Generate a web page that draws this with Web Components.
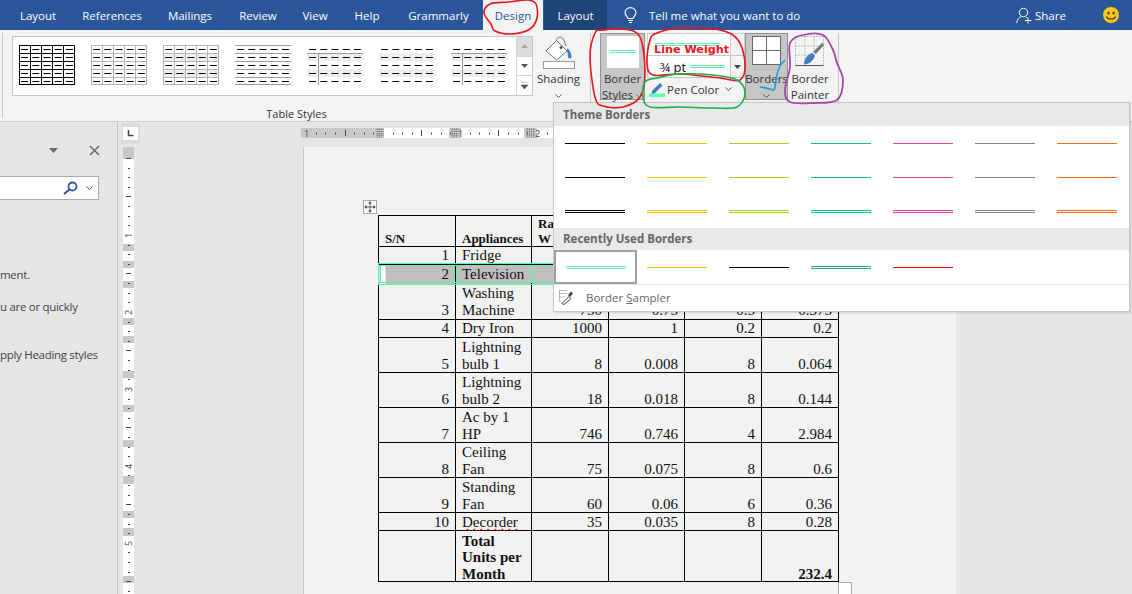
<!DOCTYPE html>
<html>
<head>
<meta charset="utf-8">
<style>
	html, body { margin: 0; padding: 0; background: #e6e6e6; }
	body { width: 1132px; height: 594px; overflow: hidden; font-family: "Open Sans", "Noto Sans", sans-serif; }
</style>
</head>
<body>
<wd-app>
	<wd-titlebar slot="title">
		<wd-tab w="64">Layout</wd-tab>
		<wd-tab w="84">References</wd-tab>
		<wd-tab w="72">Mailings</wd-tab>
		<wd-tab w="64">Review</wd-tab>
		<wd-tab w="50">View</wd-tab>
		<wd-tab w="54">Help</wd-tab>
		<wd-tab w="89">Grammarly</wd-tab>
		<wd-tab w="60" active>Design</wd-tab>
		<wd-tab w="63" dark>Layout</wd-tab>
	</wd-titlebar>
	<wd-ribbon slot="ribbon"></wd-ribbon>
	<wd-navpane slot="pane"></wd-navpane>
	<wd-vruler slot="vruler"></wd-vruler>
	<wd-document slot="doc"></wd-document>
	<wd-popup slot="over"></wd-popup>
	<wd-ink slot="over"></wd-ink>
</wd-app>

<script>
	const FONT = '"Open Sans", "Noto Sans", sans-serif';

	class WdApp extends HTMLElement {
		constructor() {
			super();
			this.attachShadow({ mode: 'open' }).innerHTML = `
			<style>
				:host { display: block; position: relative; width: 1132px; height: 594px; overflow: hidden; background: #e6e6e6; }
				.body { display: flex; height: 472px; overflow: hidden; }
			</style>
			<slot name="title"></slot>
			<slot name="ribbon"></slot>
			<div class="body">
				<slot name="pane"></slot>
				<slot name="vruler"></slot>
				<slot name="doc"></slot>
			</div>
			<slot name="over"></slot>`;
		}
	}

	class WdTitlebar extends HTMLElement {
		constructor() {
			super();
			this.attachShadow({ mode: 'open' }).innerHTML = `
			<style>
				:host { display: flex; align-items: stretch; height: 30px; padding-left: 6px; background: #2b579a; color: #fff; font: 11.5px ${FONT}; }
				.tell { display: flex; align-items: center; margin-left: 17px; width: 392px; }
				.tell svg { margin-right: 12px; }
				.share { display: flex; align-items: center; width: 68px; }
				.share svg { margin-right: 3px; }
				.smile { display: flex; align-items: center; margin-left: 19px; }
			</style>
			<slot></slot>
			<div class="tell">
				<svg width="13" height="17" viewBox="0 0 13 17" fill="none" stroke="#fff" stroke-width="1.1"><path d="M4 11.5C3.6 9.5 1 8.6 1 5.6a5.5 5 0 0 1 11 0c0 3-2.6 3.9-3 5.9zM4.2 13.5h4.6M5 15.5h3"/></svg>
				<span>Tell me what you want to do</span>
			</div>
			<div class="share">
				<svg width="16" height="17" viewBox="0 0 16 17" fill="none" stroke="#fff" stroke-width="1"><circle cx="7.5" cy="5.5" r="4.2"/><path d="M.7 16c.4-3.5 2.2-5.6 4.3-6.4M10 10l1 1M12 10.5v6M9 13.5h6.5"/></svg>
				<span>Share</span>
			</div>
			<div class="smile">
				<svg width="16" height="16" viewBox="0 0 16 16"><circle cx="8" cy="8" r="8" fill="#fcc81a"/><ellipse cx="5.4" cy="6" rx="1.1" ry="1.6" fill="#3d3200"/><ellipse cx="10.6" cy="6" rx="1.1" ry="1.6" fill="#3d3200"/><path d="M3.4 9.5c1.2 3.4 8 3.4 9.2 0" fill="none" stroke="#3d3200" stroke-width="1.1"/></svg>
			</div>`;
		}
	}

	class WdTab extends HTMLElement {
		constructor() {
			super();
			this.attachShadow({ mode: 'open' }).innerHTML = `
			<style>
				:host { display: flex; align-items: center; justify-content: center; box-sizing: border-box; }
				:host([active]) { background: #f3f3f3; color: #2b579a; }
				:host([dark]) { background: #1f4478; margin-left: 1px; }
			</style>
			<slot></slot>`;
		}

		connectedCallback() {
			this.style.width = this.getAttribute('w') + 'px';
		}
	}

	// one preview of the table style gallery
	class WdThumb extends HTMLElement {
		constructor() {
			super();
			this.attachShadow({ mode: 'open' });
		}

		connectedCallback() {
			const kind = this.getAttribute('kind');
			const rows = [4, 12, 20, 28, 36];
			const cols = [5.6, 16.8, 28, 39.2, 50.4];
			let s = '';
			if (kind === 'banded' || kind === 'first' || kind === 'plain') {
				[8, 24].forEach(v => { s += `<rect x="0" y="${v}" width="56" height="8" fill="#eeeeee"/>`; });
			}
			if (kind === 'black' || kind === 'grey' || kind === 'banded') {
				const c = kind === 'black' ? '#000' : '#b5b5b5';
				s += `<rect x=".5" y=".5" width="55" height="39" fill="none" stroke="${c}"/>`;
				[8, 16, 24, 32].forEach(v => { s += `<path d="M0 ${v}.5h56" stroke="${c}"/>`; });
				[11, 22, 33, 44].forEach(v => { s += `<path d="M${v}.5 0v40" stroke="${c}"/>`; });
			}
			if (kind === 'lines') {
				[0, 8, 16, 24, 32, 39].forEach(v => { s += `<path d="M0 ${v}.5h56" stroke="#9a9a9a"/>`; });
			}
			if (kind === 'first') {
				s += '<path d="M0 8.5h56" stroke="#9a9a9a"/><path d="M11.5 8v32" stroke="#9a9a9a"/>';
			}
			rows.forEach(y => cols.forEach(x => {
				s += `<path d="M${x - 3.5} ${y}.5h7" stroke="#000"/>`;
			}));
			this.shadowRoot.innerHTML = `
			<style>:host { display: block; width: 56px; height: 40px; } svg { display: block; }</style>
			<svg width="56" height="40" viewBox="0 0 56 40">${s}</svg>`;
		}
	}

	class WdBigButton extends HTMLElement {
		constructor() {
			super();
			this.attachShadow({ mode: 'open' }).innerHTML = `
			<style>
				:host { display: flex; flex-direction: column; align-items: center; box-sizing: border-box; height: 67px; color: #333; font: 11.5px/16px ${FONT}; text-align: center; }
				:host([on]) { background: #c6c6c6; box-shadow: inset 0 0 0 1px #929292; }
				.icon { flex: none; height: 38px; display: flex; align-items: flex-start; padding-top: 3px; box-sizing: border-box; }
				.label { flex: none; white-space: nowrap; }
			</style>
			<div class="icon"><slot name="icon"></slot></div>
			<div class="label"><slot></slot></div>`;
		}

		connectedCallback() {
			this.style.width = this.getAttribute('w') + 'px';
		}
	}

	const CHEV = `<svg width="7" height="4" viewBox="0 0 7 4" style="vertical-align:middle"><path d="M.5.5l3 3 3-3" fill="none" stroke="#555"/></svg>`;

	class WdRibbon extends HTMLElement {
		constructor() {
			super();
			this.attachShadow({ mode: 'open' }).innerHTML = `
			<style>
				:host { display: flex; height: 92px; box-sizing: border-box; background: #f3f3f3; border-bottom: 1px solid #d2d2d2; color: #333; font: 11.5px ${FONT}; }
				.sep { width: 1px; height: 85px; margin-top: 3px; background: #c6c6c6; flex: none; }
				.styles { width: 533px; margin-left: 1px; flex: none; }
				.gallery { display: flex; height: 60px; margin: 6px 0 0 8px; box-sizing: border-box; width: 521px; background: #fff; border: 1px solid #c6c6c6; }
				.thumbs { display: flex; gap: 16px; padding: 8px 0 0 6px; flex: 1; }
				.scroll { display: flex; flex-direction: column; width: 15px; border-left: 1px solid #d6d6d6; }
				.scroll div { flex: 1; display: flex; align-items: center; justify-content: center; }
				.scroll div + div { border-top: 1px solid #d6d6d6; }
				.scroll .up { background: #dcdcdc; }
				.glabel { text-align: center; margin-top: 10px; font-size: 11px; padding-left: 52px; }
				.shade { margin: 3px 0 0 -1px; width: 45px; flex: none; }
				.tools { display: flex; margin: 3px 0 0 9px; align-items: flex-start; flex: none; }
				.col { width: 100px; height: 67px; display: flex; flex-direction: column; }
				.style-row { height: 22px; margin: 0 0 0 2px; display: flex; border: 1px solid #d0d0d0; border-bottom: 0; box-sizing: border-box; background: #fff; align-items: center; }
				.style-row .ln { flex: 1; margin: 0 10px 0 7px; border-top: 3px double #5ff0b0; }
				.style-row .btn { width: 13px; height: 100%; border-left: 1px solid #d0d0d0; background: #f3f3f3; }
				.weight { height: 23px; margin-left: 2px; display: flex; align-items: center; box-sizing: border-box; border: 1px solid #c6c6c6; background: #fff; color: #111; }
				.weight .txt { padding-left: 12px; width: 30px; flex: none; font-size: 13px; white-space: nowrap; }
				.weight .ln { flex: 1; margin: 0 5px 0 0; border-top: 3px double #5ff0b0; }
				.weight .btn { width: 13px; height: 100%; border-left: 1px solid #c6c6c6; background: #f3f3f3; display: flex; align-items: center; justify-content: center; }
				.pen { display: flex; align-items: center; height: 22px; padding-left: 4px; gap: 2px; }
				.pen span { margin-right: 4px; }
				.gap { width: 1px; }
			</style>
			<div class="sep" style="margin-left:2px"></div>
			<div class="styles">
				<div class="gallery">
					<div class="thumbs">
						<wd-thumb kind="black"></wd-thumb>
						<wd-thumb kind="grey"></wd-thumb>
						<wd-thumb kind="banded"></wd-thumb>
						<wd-thumb kind="lines"></wd-thumb>
						<wd-thumb kind="first"></wd-thumb>
						<wd-thumb kind="plain"></wd-thumb>
						<wd-thumb kind="first"></wd-thumb>
					</div>
					<div class="scroll">
						<div class="up"><svg width="7" height="4"><path d="M3.5 0L7 4H0z" fill="#a6a6a6"/></svg></div>
						<div><svg width="7" height="4"><path d="M0 0h7L3.500 4z" fill="#555"/></svg></div>
						<div><svg width="7" height="7"><path d="M0 0h7M0 3h7L3.500 7z" stroke="#555" stroke-width=".6" fill="#555"/></svg></div>
					</div>
				</div>
				<div class="glabel">Table Styles</div>
			</div>
			<wd-big-button class="shade" w="45"><svg slot="icon" width="34" height="33" viewBox="0 0 34 33">
					<path d="M4 15L14.500 4.500 25 15 14.500 24z" fill="#fff" stroke="#777"/>
					<path d="M14.500 4.500C14 1 20 -1 22 4.500L24 10" fill="none" stroke="#777"/>
					<circle cx="19" cy="11.500" r="1.500" fill="#555"/>
					<path d="M25 12c3 2 4.500 6 4.500 9 0 2-3 2-3.500 0-.3-1.500 0-4-1-6z" fill="#3f7ec2"/>
					<rect x="1.500" y="25.500" width="31" height="7" fill="#fff" stroke="#999"/>
				</svg>Shading<br>${CHEV}</wd-big-button>
			<div class="sep" style="margin-left:9px"></div>
			<div class="tools">
				<wd-big-button on w="45"><svg slot="icon" width="32" height="32" viewBox="0 0 32 32"><rect width="32" height="32" fill="#fff"/><path d="M3 14.500h26M3 16.500h26" stroke="#5ff0b0"/></svg>Border<br>Styles ${CHEV}</wd-big-button>
				<div class="col">
					<div class="style-row"><div class="ln"></div><div class="btn"></div></div>
					<div class="weight"><div class="txt">¾ pt</div><div class="ln"></div><div class="btn"><svg width="7" height="4"><path d="M0 0h7L3.500 4z" fill="#444"/></svg></div></div>
					<div class="pen">
						<svg width="16" height="16" viewBox="0 0 16 16"><path d="M3 10L11 2l2.500 2.500-8 8-3 .5z" fill="#3f7ec2"/><rect x="0" y="12.500" width="16" height="3.500" fill="#5fffb4"/></svg>
						<span>Pen Color</span>${CHEV}
					</div>
				</div>
				<wd-big-button on w="43"><svg slot="icon" width="29" height="29" viewBox="0 0 29 29"><rect x=".5" y=".5" width="28" height="28" fill="#fff" stroke="#666"/><path d="M14.500 0v29M0 14.500h29" stroke="#666"/></svg>Borders<br>${CHEV}</wd-big-button>
				<div class="gap"></div>
				<wd-big-button w="42"><svg slot="icon" width="30" height="31" viewBox="0 0 30 31">
						<path d="M.5 .5h28M.5 .5v29M28.500 .5v29M10 .5v29M19 .5v14M.5 10h28M.5 19h14" fill="none" stroke="#888" stroke-dasharray="1 2"/>
						<path d="M.5 29.500h28" stroke="#555"/>
						<path d="M18 16l9-9 2 2-8 9z" fill="#777"/>
						<path d="M9 28c0-5 4-10 8-11l3 2c-1 5-6 10-11 9z" fill="#3f7ec2"/>
					</svg>Border<br>Painter</wd-big-button>
			</div>
			<div class="sep" style="margin-left:7px"></div>`;
		}
	}

	class WdNavpane extends HTMLElement {
		constructor() {
			super();
			this.attachShadow({ mode: 'open' }).innerHTML = `
			<style>
				:host { display: block; box-sizing: border-box; width: 118px; height: 100%; flex: none; background: #e6e6e6; border-right: 1px solid #c6c6c6; color: #444; font: 11.5px ${FONT}; letter-spacing: -.3px; overflow: hidden; white-space: nowrap; }
				.head { display: flex; align-items: center; justify-content: flex-end; height: 29px; margin-top: 14px; padding-right: 17px; gap: 31px; }
				.search { display: flex; align-items: center; justify-content: flex-end; box-sizing: border-box; width: 99px; height: 24px; margin-top: 11px; padding-right: 5px; gap: 8px; background: #fff; border: 1px solid #ababab; border-left: 0; }
				p { margin: 0; line-height: 16px; }
				.a { margin-top: 67px; }
				.b { margin-top: 16px; }
				.c { margin-top: 32px; }
			</style>
			<div class="head">
				<svg width="9" height="5"><path d="M0 0h9L4.500 5z" fill="#6a6a6a"/></svg>
				<svg width="11" height="11" viewBox="0 0 11 11"><path d="M1 1l9 9M10 1l-9 9" stroke="#6a6a6a" stroke-width="1.600"/></svg>
			</div>
			<div class="search">
				<svg width="15" height="14" viewBox="0 0 15 14" fill="none" stroke="#2b579a" stroke-width="1.800"><circle cx="9.500" cy="5.500" r="4"/><path d="M6.500 8.500L1 13" stroke-width="2"/></svg>
				${CHEV}
			</div>
			<p class="a">ment.</p>
			<p class="b">u are or quickly</p>
			<p class="c">pply Heading styles</p>`;
		}
	}

	function gridMark(x, y, w) {
		let s = '';
		for (let i = 0; i <= 3; i++) {
			s += `<path d="M${x + i * w / 3} ${y}v8M${x} ${y + i * 8 / 3}h${w}" stroke="#666" stroke-dasharray="1 1" stroke-width=".8"/>`;
		}
		return s;
	}

	class WdVruler extends HTMLElement {
		constructor() {
			super();
			this.attachShadow({ mode: 'open' });
			// grey stretches of the ruler, page y
			const grey = [[147, 159], [244, 251], [261, 268], [281, 288], [318, 325], [336, 343], [371, 378], [405, 412], [440, 447], [476, 484], [511, 518], [528, 536], [576, 583]];
			const top = 122;
			let s = `<rect x="5" y="25" width="11" height="450" fill="#fff"/>`;
			grey.forEach(g => { s += `<rect x="5" y="${g[0] - top}" width="11" height="${g[1] - g[0]}" fill="#c8c8c8"/>`; });
			for (let k = 0; k < 46; k++) {
				const y = Math.round(158 + k * 9.62 - top) + .5;
				if (k % 8 === 0 && k > 0) {
					s += `<text x="0" y="0" transform="translate(13.500 ${y}) rotate(-90)" text-anchor="middle" font-family="Open Sans, sans-serif" font-size="9" fill="#444">${k / 8}</text>`;
				} else if (k % 4 === 0) {
					s += `<path d="M8 ${y}h5" stroke="#444"/>`;
				} else {
					s += `<path d="M10 ${y}h2" stroke="#444"/>`;
				}
			}
			s += `<rect x="3" y="1" width="19" height="21" fill="#dcdcdc"/><rect x="5" y="5" width="15" height="13" fill="#fff"/><path d="M10.500 8v5.500h5" fill="none" stroke="#444" stroke-width="1.500"/>`;
			this.shadowRoot.innerHTML = `
			<style>:host { display: block; width: 22px; height: 100%; flex: none; } svg { display: block; }</style>
			<svg width="22" height="472" viewBox="0 0 22 472">${s}</svg>`;
		}
	}

	class WdHruler extends HTMLElement {
		constructor() {
			super();
			this.attachShadow({ mode: 'open' });
			const left = 301;
			let s = '<rect x="0" y="0" width="654" height="10" fill="#fff"/>';
			[[301, 384], [449, 461], [524, 537]].forEach(g => { s += `<rect x="${g[0] - left}" y="0" width="${g[1] - g[0]}" height="10" fill="#c8c8c8"/>`; });
			for (let k = -8; k < 24; k++) {
				const x = Math.round(383 + k * 9.62 - left) + .5;
				if (x < 0) continue;
				if (k % 8 === 0 && k !== 0) {
					s += `<text x="${x}" y="8.500" text-anchor="middle" font-family="Open Sans, sans-serif" font-size="9" fill="#444">${Math.abs(k / 8)}</text>`;
				} else if (k % 4 === 0 && k !== 0) {
					s += `<path d="M${x} 2v6" stroke="#444"/>`;
				} else if (k !== 0) {
					s += `<path d="M${x} 4.500v2" stroke="#444"/>`;
				}
			}
			s += gridMark(377 - left, 1, 6) + gridMark(452 - left, 1, 6) + gridMark(527 - left, 1, 7);
			this.shadowRoot.innerHTML = `
			<style>:host { display: block; height: 10px; width: 654px; } svg { display: block; }</style>
			<svg width="654" height="10">${s}</svg>`;
		}
	}

	const ROWS = [
		[18, '1', 'Fridge', '', '', '', ''],
		[20, '2', 'Television', '', '', '', ''],
		[35, '3', 'Washing Machine', '750', '0.75', '0.5', '0.375'],
		[17.5, '4', 'Dry Iron', '1000', '1', '0.2', '0.2'],
		[35, '5', 'Lightning bulb 1', '8', '0.008', '8', '0.064'],
		[35, '6', 'Lightning bulb 2', '18', '0.018', '8', '0.144'],
		[35, '7', 'Ac by 1 HP', '746', '0.746', '4', '2.984'],
		[35, '8', 'Ceiling Fan', '75', '0.075', '8', '0.6'],
		[35, '9', 'Standing Fan', '60', '0.06', '6', '0.36'],
		[17.5, '10', 'Decorder', '35', '0.035', '8', '0.28']
	];

	class WdDocument extends HTMLElement {
		constructor() {
			super();
			const body = ROWS.map((r, i) => {
				const name = r[2] === 'Decorder' ? '<span class="sp">Decorder</span>' : r[2];
				const cls = i === 1 ? 'sel' : (i < 4 ? 'hi' : '');
				return `<tr style="height:${r[0]}px" class="${cls}">
					<td class="n">${r[1]}</td><td class="t">${name}</td>
					<td class="n">${r[3]}</td><td class="n">${r[4]}</td><td class="n">${r[5]}</td><td class="n">${r[6]}</td></tr>`;
			}).join('');
			this.attachShadow({ mode: 'open' }).innerHTML = `
			<style>
				:host { display: block; flex: 1; min-width: 0; padding: 6px 0 0 161px; background: #e6e6e6; }
				.page { box-sizing: border-box; width: 653px; height: 460px; margin: 9px 0 0 2px; padding: 68px 0 0 74px; background: #f2f2f2; border-left: 1px solid #c6c6c6; }
				.wrap { position: relative; width: 460px; }
				table { border-collapse: collapse; table-layout: fixed; width: 460px; font: 15px/17px "Liberation Serif", serif; color: #111; }
				td, th { border: 1px solid #000; padding: 0 6px; vertical-align: bottom; overflow: hidden; position: relative; top: 1px; }
				th { font-size: 13px; font-weight: bold; text-align: left; line-height: 15px; top: 0; }
				.n { text-align: right; }
				.t { text-align: left; }
				.hi td { top: 0; }
				.sel td { background: #bfbfbf; line-height: 14px; vertical-align: middle; top: 0; padding-bottom: 2px; }
				.sel td:first-child { background: linear-gradient(90deg, #fff 0 6px, #bfbfbf 6px); }
				.sp { text-decoration: underline wavy #e02020 1px; text-underline-offset: 1px; }
				.tot td { font-weight: bold; line-height: 16.500px; }
				.move { position: absolute; left: -15px; top: -15px; width: 14px; height: 14px; box-sizing: border-box; border: 1px solid #a8a8a8; background: #f7f7f7; }
				.size { position: absolute; left: 460px; top: 367px; width: 14px; height: 14px; box-sizing: border-box; border: 1px solid #a8a8a8; background: #fff; }
				.pick { position: absolute; left: 0; top: 48px; }
				svg { display: block; }
			</style>
			<wd-hruler></wd-hruler>
			<div class="page">
				<div class="wrap">
					<div class="move"><svg width="12" height="12" viewBox="0 0 12 12"><path d="M6 1v10M1 6h10M4.800 2.200L6 .8l1.200 1.400zM4.800 9.800L6 11.200l1.200-1.400zM2.200 4.800L.8 6l1.400 1.200zM9.800 4.800L11.200 6l-1.400 1.200z" stroke="#444" stroke-width=".8" fill="#444"/></svg></div>
					<table>
						<colgroup><col style="width:77px"><col style="width:76px"><col style="width:77px"><col style="width:76px"><col style="width:77px"><col style="width:77px"></colgroup>
						<tr style="height:29px"><th>S/N</th><th>Appliances</th><th>Ra<br>W</th><th></th><th></th><th></th></tr>
						${body}
						<tr class="tot" style="height:51px"><td></td><td class="t">Total Units per Month</td><td></td><td></td><td></td><td class="n">232.4</td></tr>
					</table>
					<svg class="pick" width="176" height="24" viewBox="0 0 176 24" fill="none" stroke="#5ff0b0">
						<path d="M0 .5h176M0 2.500h176M0 19.500h176M0 21.500h176M.5 0v22M2.500 2v18M76.500 2v18M78.500 2v18M153.500 2v18M155.500 2v18"/>
					</svg>
					<div class="size"></div>
				</div>
			</div>`;
		}
	}

	class WdLine extends HTMLElement {
		constructor() {
			super();
			this.attachShadow({ mode: 'open' }).innerHTML = `
			<style>
				:host { display: flex; align-items: center; box-sizing: border-box; width: 82px; height: 34px; padding-left: 11px; }
				:host([picked]) { width: 83px; padding-left: 10px; border: 2px solid #a0a0a0; outline: 1px solid #fff; outline-offset: -3px; }
				i { display: block; width: 60px; height: 0; }
			</style>
			<i></i>`;
		}

		connectedCallback() {
			const c = this.getAttribute('c');
			const style = this.hasAttribute('double') ? `3px double ${c}` : `1px solid ${c}`;
			this.shadowRoot.querySelector('i').style.borderTop = style;
		}
	}

	class WdPopup extends HTMLElement {
		constructor() {
			super();
			const colors = ['#000000', '#ffc000', '#a5d21f', '#00c97c', '#ef3b97', '#848484', '#ff6a13'];
			const row = extra => colors.map(c => `<wd-line c="${c}" ${extra}></wd-line>`).join('');
			this.attachShadow({ mode: 'open' }).innerHTML = `
			<style>
				:host { position: absolute; left: 553px; top: 102px; box-sizing: border-box; width: 577px; height: 210px; background: #fff; border: 1px solid #c6c6c6; box-shadow: 1px 1px 2px rgba(0,0,0,.15); font: 11.500px ${FONT}; color: #666; z-index: 5; }
				h3 { margin: 0; height: 23px; padding-left: 9px; background: #e9e9e9; font: bold 11.500px/23px ${FONT}; color: #666; }
				h3.r { height: 22px; line-height: 22px; }
				.grid { display: flex; flex-wrap: wrap; height: 102px; }
				.recent { display: flex; height: 34px; }
				.recent wd-line[picked] + wd-line { margin-left: -1px; }
				.sampler { display: flex; align-items: center; height: 25px; border-top: 1px solid #e3e3e3; padding-left: 5px; gap: 12px; }
				u { text-underline-offset: 1px; }
			</style>
			<h3>Theme Borders</h3>
			<div class="grid">${row('')}${row('')}${row('double')}</div>
			<h3 class="r">Recently Used Borders</h3>
			<div class="recent">
				<wd-line picked double c="#66f0b0"></wd-line>
				<wd-line c="#ffc000"></wd-line>
				<wd-line c="#000000"></wd-line>
				<wd-line double c="#1db173"></wd-line>
				<wd-line c="#ff0000"></wd-line>
			</div>
			<div class="sampler">
				<svg width="15" height="15" viewBox="0 0 15 15"><path d="M.5 .5h8M.5 .5v11M.5 3.500h8M.5 7h5" fill="none" stroke="#777" stroke-dasharray="1 1"/><path d="M3 13.500l7-7 2 2-7 6z" fill="#fff" stroke="#444"/><path d="M9 5l3-3.500 2 2L11 7z" fill="#444"/></svg>
				<span>Border <u>S</u>ampler</span>
			</div>`;
		}
	}

	// the pen marks somebody drew over the screenshot
	class WdInk extends HTMLElement {
		constructor() {
			super();
			const marks = [
				['#e8151c', 1.6, [[490, 4], [484, 13], [491, 24], [495, 31], [512, 34], [530, 29], [537, 18], [536, 4], [528, 0], [508, 2]]],
				['#e8151c', 1.6, [[595, 33], [590, 57], [595, 97], [603, 106], [623, 107], [640, 97], [645, 73], [640, 37], [623, 29], [603, 30]]],
				['#e8151c', 1.6, [[650, 40], [647, 63], [653, 75], [680, 74], [720, 78], [740, 80], [745, 63], [738, 40], [720, 30], [680, 28], [657, 33]]],
				['#1db14b', 1.6, [[645, 82], [643, 97], [650, 107], [680, 107], [713, 108], [737, 107], [745, 93], [737, 80], [713, 75], [680, 74], [657, 78]]],
				['#a349a4', 1.8, [[790, 43], [803, 35], [823, 35], [833, 50], [837, 63], [843, 80], [837, 100], [813, 103], [790, 102], [785, 90], [790, 67]]]
			];
			const paths = marks.map(m => `<path d="${this.smooth(m[2])}" fill="none" stroke="${m[0]}" stroke-width="${m[1]}"/>`).join('');
			this.attachShadow({ mode: 'open' }).innerHTML = `
			<style>
				:host { position: absolute; left: 0; top: 0; width: 1132px; height: 594px; z-index: 6; pointer-events: none; font: bold 11.200px "DejaVu Sans", sans-serif; }
				svg { position: absolute; left: 0; top: 0; }
				.lw { position: absolute; left: 654px; top: 43px; color: #f0141e; white-space: nowrap; }
			</style>
			<svg width="1132" height="594">
				${paths}
				<path d="M785 60C778 66 777 74 776 80S775 91 773 90 766 88 760 87" fill="none" stroke="#1ba1e2" stroke-width="1.600"/>
			</svg>
			<div class="lw">Line Weight</div>`;
		}

		smooth(p) {
			const n = p.length;
			let d = `M${p[0][0]} ${p[0][1]}`;
			for (let i = 0; i < n; i++) {
				const a = p[(i - 1 + n) % n], b = p[i], c = p[(i + 1) % n], e = p[(i + 2) % n];
				d += `C${b[0] + (c[0] - a[0]) / 6} ${b[1] + (c[1] - a[1]) / 6} ${c[0] - (e[0] - b[0]) / 6} ${c[1] - (e[1] - b[1]) / 6} ${c[0]} ${c[1]}`;
			}
			return d;
		}
	}

	customElements.define('wd-app', WdApp);
	customElements.define('wd-titlebar', WdTitlebar);
	customElements.define('wd-tab', WdTab);
	customElements.define('wd-thumb', WdThumb);
	customElements.define('wd-big-button', WdBigButton);
	customElements.define('wd-ribbon', WdRibbon);
	customElements.define('wd-navpane', WdNavpane);
	customElements.define('wd-vruler', WdVruler);
	customElements.define('wd-hruler', WdHruler);
	customElements.define('wd-document', WdDocument);
	customElements.define('wd-line', WdLine);
	customElements.define('wd-popup', WdPopup);
	customElements.define('wd-ink', WdInk);
</script>
</body>
</html>
